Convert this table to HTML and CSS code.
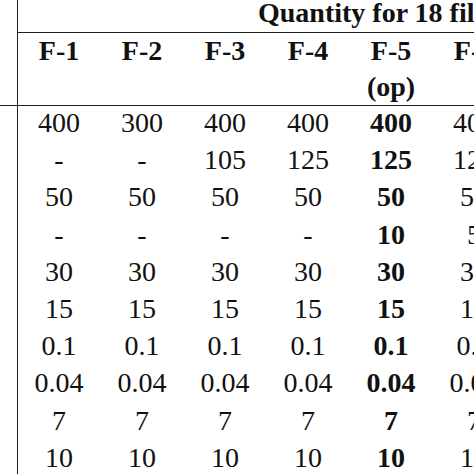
FILE: index.html
```html
<!DOCTYPE html>
<html lang="en">
<head>
<meta charset="utf-8">
<title>Formulation table</title>
<link rel="stylesheet" href="styles.css">
</head>
<body>
<table class="tbl">
  <colgroup>
    <col class="c-label">
    <col class="c-f"><col class="c-f"><col class="c-f"><col class="c-f"><col class="c-f"><col class="c-f">
  </colgroup>
  <thead>
    <tr>
      <th class="label-head" rowspan="2"></th>
      <th class="group-head" colspan="6">Quantity for 18 films (mg)</th>
    </tr>
    <tr class="f-row">
      <th>F-1</th><th>F-2</th><th>F-3</th><th>F-4</th><th>F-5<br>(op)</th><th>F-6</th>
    </tr>
  </thead>
  <tbody>
    <tr><td class="label"></td><td>400</td><td>300</td><td>400</td><td>400</td><td class="op">400</td><td>400</td></tr>
    <tr><td class="label"></td><td>-</td><td>-</td><td>105</td><td>125</td><td class="op">125</td><td>125</td></tr>
    <tr><td class="label"></td><td>50</td><td>50</td><td>50</td><td>50</td><td class="op">50</td><td>50</td></tr>
    <tr><td class="label"></td><td>-</td><td>-</td><td>-</td><td>-</td><td class="op">10</td><td>5</td></tr>
    <tr><td class="label"></td><td>30</td><td>30</td><td>30</td><td>30</td><td class="op">30</td><td>30</td></tr>
    <tr><td class="label"></td><td>15</td><td>15</td><td>15</td><td>15</td><td class="op">15</td><td>15</td></tr>
    <tr><td class="label"></td><td>0.1</td><td>0.1</td><td>0.1</td><td>0.1</td><td class="op">0.1</td><td>0.1</td></tr>
    <tr><td class="label"></td><td>0.04</td><td>0.04</td><td>0.04</td><td>0.04</td><td class="op">0.04</td><td>0.04</td></tr>
    <tr><td class="label"></td><td>7</td><td>7</td><td>7</td><td>7</td><td class="op">7</td><td>7</td></tr>
    <tr><td class="label"></td><td>10</td><td>10</td><td>10</td><td>10</td><td class="op">10</td><td>10</td></tr>
  </tbody>
</table>
</body>
</html>
```
FILE: styles.css
```css
html, body {
  margin: 0;
  padding: 0;
  background: #ffffff;
  overflow: hidden;
  width: 474px;
  height: 474px;
}

.tbl {
  font-family: "Liberation Serif", "Times New Roman", serif;
  font-size: 28px;
  color: #111111;
  border-collapse: separate;
  border-spacing: 0;
  table-layout: fixed;
  width: 515.5px;
}

.c-label { width: 17.5px; }
.c-f { width: 83px; }

.tbl th,
.tbl td {
  padding: 0;
  text-align: center;
  white-space: nowrap;
}

.label-head {
  border-right: 1.5px solid #1e1e1e;
  border-bottom: 1.5px solid #1e1e1e;
}

.group-head {
  font-weight: bold;
  line-height: 26px;
  padding-bottom: 6px !important;
  text-align: left !important;
  padding-left: 240.5px !important;
  border-bottom: 1.5px solid #1e1e1e;
}

.f-row th {
  font-weight: bold;
  line-height: 36px;
  height: 72px;
  vertical-align: top;
  border-bottom: 1.5px solid #1e1e1e;
}

.label {
  border-right: 1.5px solid #1e1e1e;
}

.tbl tbody td {
  line-height: 33px;
  padding-bottom: 4.2px;
}

.op {
  font-weight: bold;
}
```
